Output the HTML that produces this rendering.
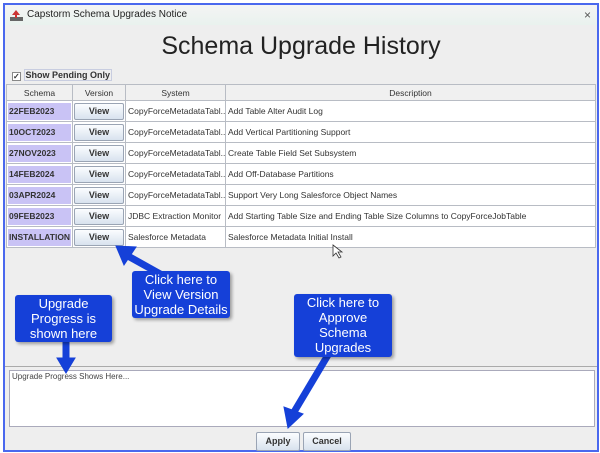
<!DOCTYPE html>
<html><head><style>
*{box-sizing:border-box;margin:0;padding:0}
body{width:600px;height:453px;background:#fff;position:relative;overflow:hidden;font-family:"Liberation Sans",Arial,sans-serif}
.win{position:absolute;left:3px;top:3px;width:596px;height:449px;border:2px solid #4a68ee;background:#eeeeee}
.title{position:absolute;left:0;top:0;right:0;height:20px;background:linear-gradient(#f4f4f4,#e9f2ee);font-size:10px;color:#222;line-height:20px;padding-left:22px}
.abs{position:absolute}
table{position:absolute;left:1px;top:79px;width:590px;border-collapse:collapse;font-size:8.5px;color:#333;table-layout:fixed}
td,th{border:1px solid #b8bcc4;height:21px;padding:0 2px;white-space:nowrap;overflow:hidden}
th{height:16px;font-weight:normal;background:#f0f0f0;color:#333}
td{background:#fff}
td.s{background:#fff;padding:0}
td.s div{background:#c9c3f5;height:17px;margin:0 1px;line-height:17px;font-weight:bold;color:#333;font-size:8.5px;padding-left:1px;overflow:hidden}
td.v{padding:1px}
.btn{height:17px;border:1px solid #9aa4b4;border-radius:2px;background:linear-gradient(#fbfdff,#d8e2ee);text-align:center;line-height:15px;font-weight:bold;font-size:9px;color:#333}
.call{position:absolute;background:#1540d8;color:#fff;font-size:13px;text-align:center;line-height:15px;border-radius:3px;box-shadow:2px 2px 3px rgba(0,0,0,.35)}
</style></head><body>
<div class="win">
<div class="title">Capstorm Schema Upgrades Notice<span style="position:absolute;right:6px;top:0;font-size:12px;color:#555">×</span>
<svg style="position:absolute;left:5px;top:4px" width="13" height="12"><rect x="0" y="8" width="13" height="4" fill="#666"/><path d="M6 1l4 5H7v3H5V6H2z" fill="#c33"/></svg></div>
<div class="abs" style="left:0;right:0;top:27px;text-align:center;font-size:25px;color:#222">Schema Upgrade History</div>
<div class="abs" style="left:7px;top:65px;font-size:9px;font-weight:bold;color:#333"><span style="display:inline-block;width:9px;height:9px;border:1px solid #888;background:#fff;font-size:8px;line-height:8px;vertical-align:-1px">✓</span> <span style="border:1px solid #c8cde0;padding:0 1px">Show Pending Only</span></div>
<table>
<colgroup><col style="width:66px"><col style="width:53px"><col style="width:100px"><col></colgroup>
<tr><th>Schema</th><th>Version</th><th>System</th><th>Description</th></tr>
<tr><td class="s"><div>22FEB2023</div></td><td class="v"><div class="btn">View</div></td><td>CopyForceMetadataTabl...</td><td>Add Table Alter Audit Log</td></tr>
<tr><td class="s"><div>10OCT2023</div></td><td class="v"><div class="btn">View</div></td><td>CopyForceMetadataTabl...</td><td>Add Vertical Partitioning Support</td></tr>
<tr><td class="s"><div>27NOV2023</div></td><td class="v"><div class="btn">View</div></td><td>CopyForceMetadataTabl...</td><td>Create Table Field Set Subsystem</td></tr>
<tr><td class="s"><div>14FEB2024</div></td><td class="v"><div class="btn">View</div></td><td>CopyForceMetadataTabl...</td><td>Add Off-Database Partitions</td></tr>
<tr><td class="s"><div>03APR2024</div></td><td class="v"><div class="btn">View</div></td><td>CopyForceMetadataTabl...</td><td>Support Very Long Salesforce Object Names</td></tr>
<tr><td class="s"><div>09FEB2023</div></td><td class="v"><div class="btn">View</div></td><td>JDBC Extraction Monitor</td><td>Add Starting Table Size and Ending Table Size Columns to CopyForceJobTable</td></tr>
<tr><td class="s"><div>INSTALLATION</div></td><td class="v"><div class="btn">View</div></td><td>Salesforce Metadata</td><td>Salesforce Metadata Initial Install</td></tr>
</table>
<div class="abs" style="left:0;right:0;top:361px;border-top:1px solid #aaa"></div>
<div class="abs" style="left:4px;top:365px;width:586px;height:57px;background:#fff;border:1px solid #aab;font-size:8px;color:#444;padding:1px 2px">Upgrade Progress Shows Here...</div>
<div class="abs btn" style="left:251px;top:427px;width:44px;height:19px;line-height:17px">Apply</div>
<div class="abs btn" style="left:298px;top:427px;width:48px;height:19px;line-height:17px">Cancel</div>
</div>
<svg class="abs" style="left:0;top:0" width="600" height="453">
<g fill="#1540d8" stroke="#1540d8">
<path d="M180 285 L128 256" stroke-width="7"/><path d="M116 246 L136 247 L124 265 Z"/>
<path d="M66 340 L66 360" stroke-width="7"/><path d="M57 358 L75 358 L66 373 Z"/>
<path d="M328 355 L294 412" stroke-width="7"/><path d="M288 428 L284 407 L303 414 Z"/>
</g>
<path d="M333 245 l0 11 l3 -3 l3 5 l2 -1 l-3 -5 l4 0 z" fill="#fff" stroke="#333" stroke-width=".8"/>
</svg>
<div class="call" style="left:132px;top:271px;width:98px;height:47px;padding-top:1px">Click here to<br>View Version<br>Upgrade Details</div>
<div class="call" style="left:15px;top:295px;width:97px;height:47px;padding-top:1px">Upgrade<br>Progress is<br>shown here</div>
<div class="call" style="left:294px;top:294px;width:98px;height:63px;padding-top:1px">Click here to<br>Approve<br>Schema<br>Upgrades</div>
</body></html>
